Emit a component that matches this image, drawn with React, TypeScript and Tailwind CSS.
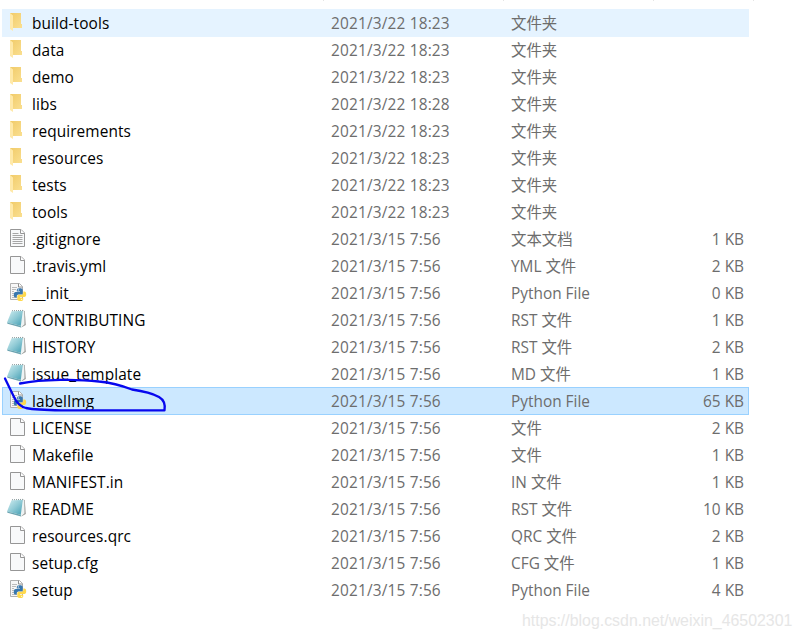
import React from 'react';

type Kind = 'folder' | 'text' | 'blank' | 'python' | 'notepad';

interface Entry {
  name: string;
  date: string;
  type: string;
  size?: string;
  kind: Kind;
}

const NEW = '2021/3/22 18:23';
const OLD = '2021/3/15 7:56';

const entries: Entry[] = [
  { name: 'build-tools', date: NEW, type: '文件夹', kind: 'folder' },
  { name: 'data', date: NEW, type: '文件夹', kind: 'folder' },
  { name: 'demo', date: NEW, type: '文件夹', kind: 'folder' },
  { name: 'libs', date: '2021/3/22 18:28', type: '文件夹', kind: 'folder' },
  { name: 'requirements', date: NEW, type: '文件夹', kind: 'folder' },
  { name: 'resources', date: NEW, type: '文件夹', kind: 'folder' },
  { name: 'tests', date: NEW, type: '文件夹', kind: 'folder' },
  { name: 'tools', date: NEW, type: '文件夹', kind: 'folder' },
  { name: '.gitignore', date: OLD, type: '文本文档', size: '1 KB', kind: 'text' },
  { name: '.travis.yml', date: OLD, type: 'YML 文件', size: '2 KB', kind: 'blank' },
  { name: '__init__', date: OLD, type: 'Python File', size: '0 KB', kind: 'python' },
  { name: 'CONTRIBUTING', date: OLD, type: 'RST 文件', size: '1 KB', kind: 'notepad' },
  { name: 'HISTORY', date: OLD, type: 'RST 文件', size: '2 KB', kind: 'notepad' },
  { name: 'issue_template', date: OLD, type: 'MD 文件', size: '1 KB', kind: 'notepad' },
  { name: 'labelImg', date: OLD, type: 'Python File', size: '65 KB', kind: 'python' },
  { name: 'LICENSE', date: OLD, type: '文件', size: '2 KB', kind: 'blank' },
  { name: 'Makefile', date: OLD, type: '文件', size: '1 KB', kind: 'blank' },
  { name: 'MANIFEST.in', date: OLD, type: 'IN 文件', size: '1 KB', kind: 'blank' },
  { name: 'README', date: OLD, type: 'RST 文件', size: '10 KB', kind: 'notepad' },
  { name: 'resources.qrc', date: OLD, type: 'QRC 文件', size: '2 KB', kind: 'blank' },
  { name: 'setup.cfg', date: OLD, type: 'CFG 文件', size: '1 KB', kind: 'blank' },
  { name: 'setup', date: OLD, type: 'Python File', size: '4 KB', kind: 'python' },
];

function FileIcon({ kind }: { kind: Kind }) {
  return (
    <svg width="22" height="22" viewBox="0 0 22 22" fill="none">
      {kind === 'folder' && (
        <>
          <path d="M4 1h11v11h1v4H5z" fill="url(#folder)" />
          <path d="M4 1l3 2.500v15.500L4 17z" fill="#ffe9a9" />
        </>
      )}
      {(kind === 'text' || kind === 'blank') && (
        <>
          <path d="M4.500 1.500h10.500l3.500 3.500v13.500h-14z" fill="#f8f9fa" stroke="#969696" />
          <path d="M14.500 1.500v4h4" fill="#fff" stroke="#969696" />
        </>
      )}
      {kind === 'text' && (
        <path d="M6.500 5.500h6M6.500 7.500h10M6.500 9.500h10M6.500 11.500h10M6.500 13.500h10M6.500 15.500h10" stroke="#a6a6a6" />
      )}
      {kind === 'python' && (
        <>
          <path d="M4.500 1.500h9l3 3v13h-12z" fill="#f7f7f7" stroke="#b0b0b0" />
          <path d="M12.500 1.500v3.500h4" fill="#fff" stroke="#8f8f8f" />
          <path d="M6 5.500h5M6 7.500h4M6 9.500h2M6 11.500h2M6 13.500h3M6 15.500h5" stroke="#bbb" />
          <path
            d="M13.700 6.200c-2.500 0-2.900.9-2.900 1.800v1.500h3.200v.6H9.700c-1.300 0-1.900 1.100-1.900 2.800s.6 2.700 1.900 2.700h1.100v-1.300c0-1 .8-1.800 1.800-1.800h2.700c.8 0 1.400-.7 1.400-1.500V8c0-1.200-1-1.800-3-1.800z"
            fill="#3977ad"
          />
          <path
            d="M14.300 19c2.500 0 2.900-.9 2.900-1.800v-1.500H14v-.6h4.300c1.300 0 1.900-1.100 1.900-2.800s-.6-2.700-1.900-2.700h-1v1.300c0 1-.8 1.800-1.800 1.800h-2.700c-.8 0-1.500.7-1.500 1.500v3c0 1.200 1 1.800 3 1.800z"
            fill="#ffd94c"
          />
          <circle cx="12.300" cy="7.900" r=".6" fill="#fff" />
          <circle cx="15.700" cy="17.300" r=".6" fill="#fff" />
        </>
      )}
      {kind === 'notepad' && (
        <>
          <path d="M16.500 1.500l2.300.5 1 14-4.500 2.500z" fill="#9b9d9a" />
          <path d="M16.500 1.800l1.700.4.300 13-3.500 3.300-1.500-2z" fill="#eef3f3" />
          <path d="M5.500 2.200L16.800 2 14.800 16.700 1 13.500z" fill="url(#cover)" />
          <path d="M1 13.500l13.800 3.200.2 1.800L1.500 14.800z" fill="#6aa3b0" />
          <path d="M6 1.700l11-.3" stroke="#8a9c9e" strokeDasharray="1 1" />
        </>
      )}
    </svg>
  );
}

function Row({ entry, index }: { entry: Entry; index: number }) {
  const look =
    index === 0 ? 'bg-[#e5f3ff] border-[#e5f3ff]' : index === 14 ? 'bg-[#cce8ff] border-[#99d1ff]' : 'border-transparent';
  return (
    <div className={`-mb-px flex h-7 w-[747px] items-center border text-[15.4px] leading-[26px] text-[#6d6d6d] ${look}`}>
      <div className="flex w-[328px] items-start pl-[3px]">
        <div className="mt-0.5 h-[22px] w-[22px]">
          <FileIcon kind={entry.kind} />
        </div>
        <span className="ml-1 pt-px leading-[25px] tracking-[0.1px] text-black">{entry.name}</span>
      </div>
      <span className="w-[180px] pt-px leading-[25px] tracking-[0.18px]">{entry.date}</span>
      <span className="w-[120px] pt-px leading-[25px]">{entry.type}</span>
      <span className="flex-1 pt-px pr-1 text-right leading-[25px]">{entry.size}</span>
    </div>
  );
}

export default function App() {
  return (
    <div className="relative h-[639px] w-[801px] overflow-hidden bg-white whitespace-nowrap font-['Open_Sans','Noto_Sans_CJK_SC',sans-serif]">
      <svg width="0" height="0" className="absolute">
        <defs>
          <linearGradient id="cover" x1="0" y1="0" x2="1" y2="1">
            <stop stopColor="#d0edf0" />
            <stop offset=".5" stopColor="#8fcad5" />
            <stop offset="1" stopColor="#439eb3" />
          </linearGradient>
          <linearGradient id="folder" x1="0" y1="0" x2="1" y2="1">
            <stop stopColor="#f1cb69" />
            <stop offset="1" stopColor="#fadf90" />
          </linearGradient>
        </defs>
      </svg>

      {/* Bottom edge of the column header dividers */}
      <div className="flex h-[9px] pl-[323px]">
        <div className="h-px w-[180px] border-l border-[#e5e5e5]" />
        <div className="h-px w-[150px] border-l border-[#e5e5e5]" />
        <div className="h-px w-[101px] border-x border-[#e5e5e5]" />
      </div>

      <main className="pl-[2px]">
        {entries.map((entry, index) => (
          <Row key={entry.name} entry={entry} index={index} />
        ))}
      </main>

      {/* Pen mark round labelImg */}
      <svg className="absolute inset-0" width="801" height="639" fill="none">
        <path
          d="M5 378.500L14 397Q18 406 26 408Q36 410 61 410.300H164.500Q166 401 159 397Q150 392 132 389.500Q115 383 99 381.500C78 379 43 379 20 383.500"
          stroke="#0707ee"
          strokeWidth="2.300"
          strokeLinecap="round"
          strokeLinejoin="round"
        />
      </svg>

      <div className="absolute top-[611px] left-[522px] font-['Liberation_Sans',sans-serif] text-[15.9px] leading-5 text-[#e6e6e6]">
        https://blog.csdn.net/weixin_46502301
      </div>
    </div>
  );
}
